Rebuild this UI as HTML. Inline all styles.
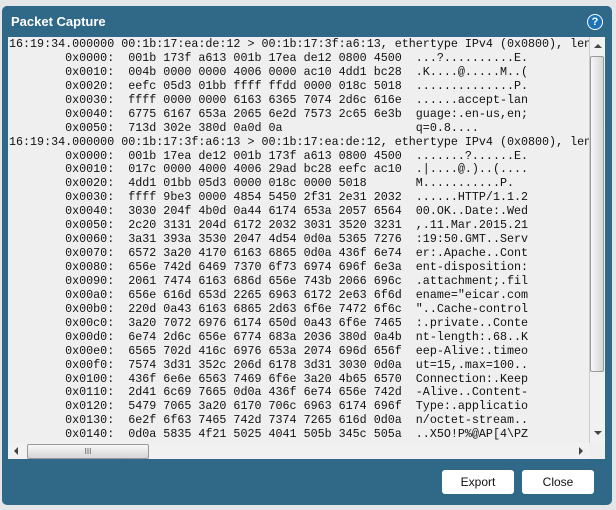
<!DOCTYPE html>
<html><head><style>
body{margin:0;width:616px;height:510px;background:#e4e6e8;position:relative;overflow:hidden;font-family:"Liberation Sans",sans-serif}
.dlg{position:absolute;left:2px;top:6px;width:610px;height:499px;background:#306887;border-radius:5px}
.title{position:absolute;left:11px;top:14px;color:#fff;font-weight:bold;font-size:13px}
.help{position:absolute;left:587px;top:14px;width:14px;height:14px;border-radius:50%;background:#1d73b5;border:1.5px solid #fff;color:#fff;font-size:11px;font-weight:bold;text-align:center;line-height:14px}
.box{position:absolute;left:8px;top:37px;width:597px;height:422px;background:#efefef;overflow:hidden}
pre{margin:0;position:absolute;left:1px;top:1px;font-family:"Liberation Mono",monospace;font-size:11.7px;line-height:13.93px;color:#111;white-space:pre}
.vs{position:absolute;left:581px;top:0;width:16px;height:406px;background:#f1f1f1;border-left:1px solid #ccc}
.vt{position:absolute;left:582px;top:19px;width:14px;height:316px;background:linear-gradient(90deg,#f7f7f7,#d6d6d6);border:1px solid #999;border-radius:2px;box-sizing:border-box}
.hs{position:absolute;left:0;top:406px;width:581px;height:16px;background:#f1f1f1}
.ht{position:absolute;left:19px;top:407px;width:122px;height:15px;background:linear-gradient(#f7f7f7,#d6d6d6);border:1px solid #999;border-radius:2px;box-sizing:border-box;font-size:8px;text-align:center;line-height:13px;color:#555}
.ar{position:absolute;width:0;height:0}
.btn{position:absolute;top:470px;width:72px;height:24px;background:#fff;border-radius:3px;font-size:12px;text-align:center;line-height:24px;color:#111}
</style></head><body>
<div class="dlg"></div>
<div class="title">Packet Capture</div>
<div class="help">?</div>
<div class="box">
<pre>16:19:34.000000 00:1b:17:ea:de:12 &gt; 00:1b:17:3f:a6:13, ethertype IPv4 (0x0800), len
        0x0000:  001b 173f a613 001b 17ea de12 0800 4500  ...?..........E.
        0x0010:  004b 0000 0000 4006 0000 ac10 4dd1 bc28  .K....@.....M..(
        0x0020:  eefc 05d3 01bb ffff ffdd 0000 018c 5018  ..............P.
        0x0030:  ffff 0000 0000 6163 6365 7074 2d6c 616e  ......accept-lan
        0x0040:  6775 6167 653a 2065 6e2d 7573 2c65 6e3b  guage:.en-us,en;
        0x0050:  713d 302e 380d 0a0d 0a                   q=0.8....
16:19:34.000000 00:1b:17:3f:a6:13 &gt; 00:1b:17:ea:de:12, ethertype IPv4 (0x0800), len
        0x0000:  001b 17ea de12 001b 173f a613 0800 4500  .......?......E.
        0x0010:  017c 0000 4000 4006 29ad bc28 eefc ac10  .|....@.)..(....
        0x0020:  4dd1 01bb 05d3 0000 018c 0000 5018       M...........P.
        0x0030:  ffff 9be3 0000 4854 5450 2f31 2e31 2032  ......HTTP/1.1.2
        0x0040:  3030 204f 4b0d 0a44 6174 653a 2057 6564  00.OK..Date:.Wed
        0x0050:  2c20 3131 204d 6172 2032 3031 3520 3231  ,.11.Mar.2015.21
        0x0060:  3a31 393a 3530 2047 4d54 0d0a 5365 7276  :19:50.GMT..Serv
        0x0070:  6572 3a20 4170 6163 6865 0d0a 436f 6e74  er:.Apache..Cont
        0x0080:  656e 742d 6469 7370 6f73 6974 696f 6e3a  ent-disposition:
        0x0090:  2061 7474 6163 686d 656e 743b 2066 696c  .attachment;.fil
        0x00a0:  656e 616d 653d 2265 6963 6172 2e63 6f6d  ename="eicar.com
        0x00b0:  220d 0a43 6163 6865 2d63 6f6e 7472 6f6c  "..Cache-control
        0x00c0:  3a20 7072 6976 6174 650d 0a43 6f6e 7465  :.private..Conte
        0x00d0:  6e74 2d6c 656e 6774 683a 2036 380d 0a4b  nt-length:.68..K
        0x00e0:  6565 702d 416c 6976 653a 2074 696d 656f  eep-Alive:.timeo
        0x00f0:  7574 3d31 352c 206d 6178 3d31 3030 0d0a  ut=15,.max=100..
        0x0100:  436f 6e6e 6563 7469 6f6e 3a20 4b65 6570  Connection:.Keep
        0x0110:  2d41 6c69 7665 0d0a 436f 6e74 656e 742d  -Alive..Content-
        0x0120:  5479 7065 3a20 6170 706c 6963 6174 696f  Type:.applicatio
        0x0130:  6e2f 6f63 7465 742d 7374 7265 616d 0d0a  n/octet-stream..
        0x0140:  0d0a 5835 4f21 5025 4041 505b 345c 505a  ..X5O!P%@AP[4\PZ</pre>
<div class="vs"></div><div class="vt"></div>
<div class="ar" style="left:586px;top:7px;border-left:4px solid transparent;border-right:4px solid transparent;border-bottom:4px solid #444"></div>
<div class="ar" style="left:586px;top:394px;border-left:4px solid transparent;border-right:4px solid transparent;border-top:4px solid #444"></div>
<div class="hs"></div><div class="ht">III</div>
<div class="ar" style="left:6px;top:410px;border-top:4px solid transparent;border-bottom:4px solid transparent;border-right:4px solid #444"></div>
<div class="ar" style="left:571px;top:410px;border-top:4px solid transparent;border-bottom:4px solid transparent;border-left:4px solid #444"></div>
</div>
<div class="btn" style="left:442px">Export</div>
<div class="btn" style="left:522px">Close</div>
</body></html>
